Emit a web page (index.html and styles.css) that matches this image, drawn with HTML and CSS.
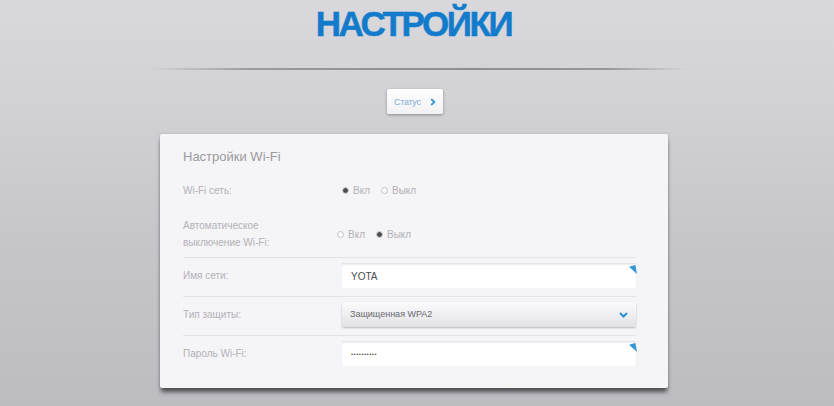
FILE: index.html
```html
<!DOCTYPE html>
<html lang="ru">
<head>
    <meta charset="UTF-8">
    <meta name="viewport" content="width=device-width, initial-scale=1.0">
    <title>Настройки</title>
    <link rel="stylesheet" href="styles.css">
</head>
<body>
    <div class="page">
        <h1 class="page-title">НАСТРОЙКИ</h1>
        <div class="divider"></div>

        <!-- Status button -->
        <div class="status-wrap">
            <button class="status-btn">Статус
                <svg width="6" height="8" viewBox="0 0 6 8"><path d="M1.2 1 L4.4 4 L1.2 7" fill="none" stroke="#3a98dc" stroke-width="1.8"/></svg>
            </button>
        </div>

        <!-- Wi-Fi settings card -->
        <div class="card">
            <div class="card-title">Настройки Wi-Fi</div>

            <div class="row row-first">
                <div class="label">Wi-Fi сеть:</div>
                <div class="radios">
                    <label class="radio"><span class="dot checked"></span>Вкл</label>
                    <label class="radio"><span class="dot"></span>Выкл</label>
                </div>
            </div>

            <div class="row row-auto">
                <div class="label">Автоматическое<br>выключение Wi-Fi:</div>
                <div class="radios">
                    <label class="radio"><span class="dot"></span>Вкл</label>
                    <label class="radio"><span class="dot checked"></span>Выкл</label>
                </div>
            </div>

            <div class="row row-field">
                <div class="label">Имя сети:</div>
                <div class="field">YOTA
                    <svg class="corner" width="8" height="9" viewBox="0 0 10 11"><polygon points="0,2 8,0 10,11" fill="#3595d8"/></svg>
                </div>
            </div>

            <div class="row row-field">
                <div class="label">Тип защиты:</div>
                <div class="select">Защищенная WPA2
                    <svg class="select-arrow" width="9" height="6" viewBox="0 0 9 6"><path d="M1 1 L4.5 4.5 L8 1" fill="none" stroke="#2a8fd8" stroke-width="2"/></svg>
                </div>
            </div>

            <div class="row row-field">
                <div class="label">Пароль Wi-Fi:</div>
                <div class="field field-pass">••••••••••
                    <svg class="corner" width="8" height="9" viewBox="0 0 10 11"><polygon points="0,2 8,0 10,11" fill="#3595d8"/></svg>
                </div>
            </div>
        </div>
    </div>
</body>
</html>
```

FILE: styles.css
```css
body {
    margin: 0;
    height: 406px;
    overflow: hidden;
    font-family: "Liberation Sans", Arial, sans-serif;
    background: linear-gradient(to bottom, #d9d8dd 0%, #d2d1d6 25%, #c6c5ca 60%, #bdbcc1 100%);
}

.page {
    padding-top: 4px;
}

.page-title {
    margin: 0;
    padding-right: 7px;
    text-align: center;
    font-size: 35px;
    line-height: 40px;
    font-weight: bold;
    letter-spacing: -2.4px;
    color: #137bcb;
    -webkit-text-stroke: 0.5px #137bcb;
}

.divider {
    width: 540px;
    height: 2px;
    margin: 24px auto 0;
    background: linear-gradient(to right, rgba(120,120,125,0) 0%, #9a999e 20%, #8d8c91 60%, #97969b 85%, rgba(120,120,125,0) 100%);
}

.status-wrap {
    display: flex;
    justify-content: center;
    margin-top: 19px;
    padding-right: 4px;
}

.status-btn {
    display: flex;
    align-items: center;
    gap: 9px;
    height: 25px;
    width: 56px;
    padding: 0 0 0 7px;
    border: none;
    border-radius: 2px;
    background: linear-gradient(to bottom, #ffffff, #f1f1f4);
    box-shadow: 0 1px 3px rgba(0, 0, 0, 0.35);
    font-family: "Liberation Sans", Arial, sans-serif;
    font-size: 9px;
    color: #86abd8;
    letter-spacing: -0.3px;
}

.card {
    width: 453px;
    margin: 20px auto 0;
    padding: 15px 32px 14px 23px;
    background: #f5f4f7;
    border-radius: 2px;
    box-shadow: 0 5px 4px -1px rgba(40, 40, 45, 0.75), 0 0 3px rgba(0, 0, 0, 0.15);
    transform: translateX(-3px);
}

.card-title {
    font-size: 13px;
    line-height: 16px;
    color: #9b9a9f;
    margin-bottom: 12px;
}

.row {
    display: grid;
    grid-template-columns: 159px 1fr;
    align-items: center;
}

.label {
    font-size: 10px;
    line-height: 17px;
    color: #b3b2b7;
}

.row-first {
    height: 26px;
}

.row-auto {
    margin-top: 14px;
    padding-bottom: 6px;
}

.row-auto .radios {
    margin-left: -5px;
}

.radios {
    display: flex;
    gap: 11px;
}

.radio {
    display: flex;
    align-items: center;
    gap: 4px;
    font-size: 10px;
    color: #b3b2b7;
}

.dot {
    width: 7px;
    height: 7px;
    border-radius: 50%;
    border: 1px solid #c4c3c8;
    background: #fbfbfc;
    box-sizing: border-box;
}

.dot.checked {
    background: radial-gradient(circle, #4a4a4e 0, #4a4a4e 2px, #d8d8dc 3px);
    border-color: #bdbcc1;
}

.row-field {
    border-top: 1px solid #e3e2e6;
    padding: 5px 0 8px;
}

.field {
    position: relative;
    height: 25px;
    line-height: 25px;
    padding-left: 9px;
    background: #ffffff;
    border-top: 1px solid #e6e6e9;
    box-shadow: inset 0 1px 2px rgba(0, 0, 0, 0.08);
    font-size: 10px;
    color: #4d4d52;
    box-sizing: border-box;
}

.field-pass {
    font-size: 6px;
    letter-spacing: 0.5px;
    color: #555;
}

.corner {
    position: absolute;
    top: 1px;
    right: -1px;
}

.select {
    position: relative;
    height: 25px;
    line-height: 25px;
    padding-left: 8px;
    border-radius: 2px;
    background: linear-gradient(to bottom, #fbfbfc 0%, #eeeef1 55%, #e1e0e4 100%);
    box-shadow: 0 1px 2px rgba(0, 0, 0, 0.25);
    font-size: 9px;
    color: #6a6a6f;
    box-sizing: border-box;
}

.select-arrow {
    position: absolute;
    right: 8px;
    top: 10px;
}
```
